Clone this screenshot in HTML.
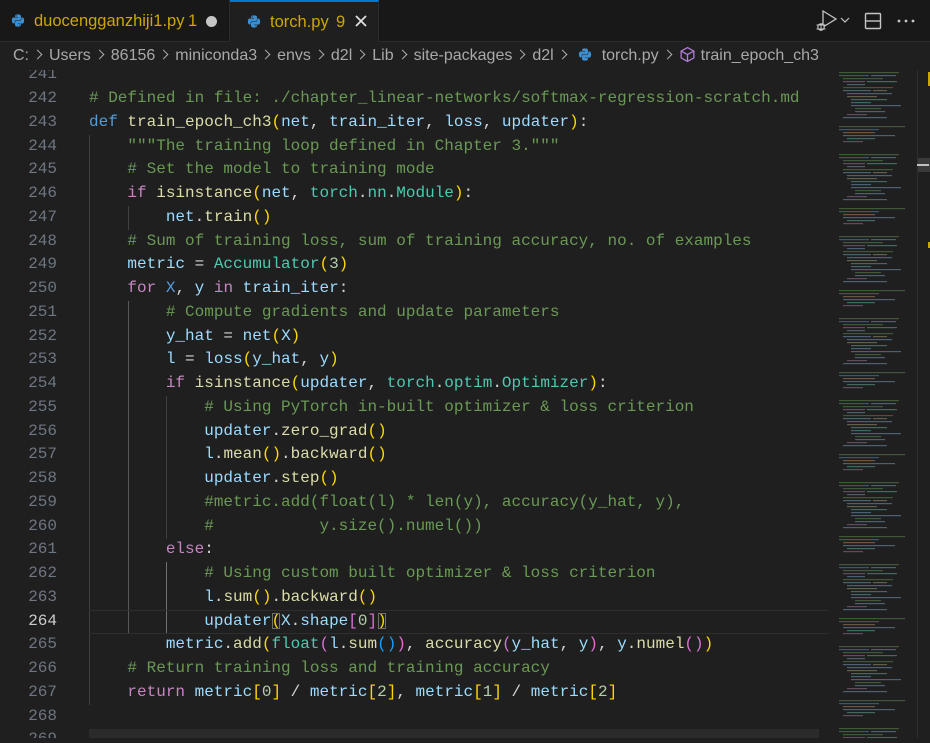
<!DOCTYPE html>
<html><head><meta charset="utf-8">
<style>
*{margin:0;padding:0;box-sizing:border-box}
body{width:930px;height:738px;background:#1f1f1f;overflow:hidden;position:relative;font-family:"Liberation Sans",sans-serif}
#tabs{position:absolute;left:0;top:0;width:930px;height:42px;background:#181818;border-bottom:1px solid #2b2b2b}
.tab{position:absolute;top:0;height:42px;font-size:16.5px;color:#cca700;line-height:42px;white-space:nowrap}
#t1{left:0;width:230px;border-right:1px solid #2b2b2b}
#t2{left:230px;width:149px;background:#1f1f1f;border-top:2px solid #0078d4;border-right:1px solid #2b2b2b;line-height:40px;height:43px}
.py{position:absolute;top:13px;width:14px;height:15px}
#bc{position:absolute;left:0;top:42px;width:930px;height:28px;background:#1f1f1f;color:#a9a9a9;font-size:16px;line-height:28px;padding-left:13px;white-space:nowrap}
#bc .s{display:inline-block;width:20px;height:12px;vertical-align:-1px;position:relative}
#bc .s:after{content:"";position:absolute;left:5px;top:2px;width:6px;height:6px;border-right:1.3px solid #a9a9a9;border-top:1.3px solid #a9a9a9;transform:rotate(45deg)}
#code{position:absolute;left:0;top:70px;width:835px;height:668px;overflow:hidden}
#inner{position:absolute;left:0;top:-6.6px;width:835px}
.ln{height:23.76px;line-height:23.76px;font-family:"Liberation Mono",monospace;font-size:16px;white-space:pre;position:relative}
.num{position:absolute;left:0;width:57px;text-align:right;color:#6e7681}
.tx{position:absolute;left:89px;color:#d4d4d4}
.k{color:#569cd6}.c{color:#c586c0}.f{color:#dcdcaa}.v{color:#9cdcfe}.t{color:#4ec9b0}.m{color:#6a9955}.n{color:#b5cea8}
.b1{color:#ffd700}.b2{color:#da70d6}.b3{color:#179fff}
.g{position:absolute;width:1px;background:#404040}
#mm{position:absolute;left:835px;top:70px;width:82px;height:668px;background:#1f1f1f}
#sb{position:absolute;left:917px;top:70px;width:13px;height:668px;background:#1f1f1f;border-left:1px solid #2e2e2e}
</style></head><body>
<div id="tabs">
 <div class="tab" id="t1">
  <svg class="py" style="left:11px" viewBox="0 0 16 16"><path d="M7.9 1C4.5 1 4.7 2.5 4.7 2.5V4h3.3v.5H3.3S1 4.2 1 7.9s2 3.5 2 3.5h1.2V9.7s-.1-2 2-2h3.3s1.9 0 1.9-1.9V2.9S11.7 1 7.9 1zM6 2.1a.6.6 0 110 1.2.6.6 0 010-1.2z" fill="#3b8ed0"/><path d="M8.1 15c3.4 0 3.2-1.5 3.2-1.5V12H8v-.5h4.7S15 11.8 15 8.1s-2-3.5-2-3.5h-1.2v1.7s.1 2-2 2H6.5s-1.9 0-1.9 1.9v2.9S4.3 15 8.1 15zm1.9-1.1a.6.6 0 110-1.2.6.6 0 010 1.2z" fill="#3b8ed0"/></svg>
  <span style="position:absolute;left:34px">duocengganzhiji1.py</span>
  <span style="position:absolute;left:188px">1</span>
  <span style="position:absolute;left:206px;top:16px;width:11px;height:11px;border-radius:50%;background:#c5c5c5"></span>
 </div>
 <div class="tab" id="t2">
  <svg class="py" style="left:17px;top:12px" viewBox="0 0 16 16"><path d="M7.9 1C4.5 1 4.7 2.5 4.7 2.5V4h3.3v.5H3.3S1 4.2 1 7.9s2 3.5 2 3.5h1.2V9.7s-.1-2 2-2h3.3s1.9 0 1.9-1.9V2.9S11.7 1 7.9 1zM6 2.1a.6.6 0 110 1.2.6.6 0 010-1.2z" fill="#3b8ed0"/><path d="M8.1 15c3.4 0 3.2-1.5 3.2-1.5V12H8v-.5h4.7S15 11.8 15 8.1s-2-3.5-2-3.5h-1.2v1.7s.1 2-2 2H6.5s-1.9 0-1.9 1.9v2.9S4.3 15 8.1 15zm1.9-1.1a.6.6 0 110-1.2.6.6 0 010 1.2z" fill="#3b8ed0"/></svg>
  <span style="position:absolute;left:40px">torch.py</span>
  <span style="position:absolute;left:106px">9</span>
  <svg style="position:absolute;left:125px;top:13px" width="12" height="12" viewBox="0 0 12 12"><path d="M1 1L11 11M11 1L1 11" stroke="#e0e0e0" stroke-width="1.8"/></svg>
 </div>
 <svg style="position:absolute;left:813px;top:9px" width="26" height="24" viewBox="0 0 26 24"><path d="M10 2L23 10L10 18Z" fill="none" stroke="#c5c5c5" stroke-width="1.3"/><circle cx="8" cy="18" r="3.2" fill="#181818" stroke="#c5c5c5" stroke-width="1.2"/><path d="M3.5 16h9M3.5 20h9M8 15v7" stroke="#c5c5c5" stroke-width="1"/></svg>
 <svg style="position:absolute;left:840px;top:17px" width="10" height="7" viewBox="0 0 10 7"><path d="M1 1l4 4 4-4" fill="none" stroke="#c5c5c5" stroke-width="1.2"/></svg>
 <svg style="position:absolute;left:864px;top:12px" width="18" height="18" viewBox="0 0 18 18"><rect x="1.5" y="1.5" width="15" height="15" rx="1" fill="none" stroke="#c5c5c5" stroke-width="1.4"/><path d="M1.5 9h15" stroke="#c5c5c5" stroke-width="1.4"/></svg>
 <svg style="position:absolute;left:897px;top:19px" width="18" height="4" viewBox="0 0 18 4"><circle cx="2" cy="2" r="1.4" fill="#c5c5c5"/><circle cx="9" cy="2" r="1.4" fill="#c5c5c5"/><circle cx="16" cy="2" r="1.4" fill="#c5c5c5"/></svg>
</div>
<div id="bc">C:<span class="s"></span>Users<span class="s"></span>86156<span class="s"></span>miniconda3<span class="s"></span>envs<span class="s"></span>d2l<span class="s"></span>Lib<span class="s"></span>site-packages<span class="s"></span>d2l<span class="s"></span><svg width="14" height="15" viewBox="0 0 16 16" style="vertical-align:-2px;margin:0 10px 0 4px"><path d="M7.9 1C4.5 1 4.7 2.5 4.7 2.5V4h3.3v.5H3.3S1 4.2 1 7.9s2 3.5 2 3.5h1.2V9.7s-.1-2 2-2h3.3s1.9 0 1.9-1.9V2.9S11.7 1 7.9 1z" fill="#3b8ed0"/><path d="M8.1 15c3.4 0 3.2-1.5 3.2-1.5V12H8v-.5h4.7S15 11.8 15 8.1s-2-3.5-2-3.5h-1.2v1.7s.1 2-2 2H6.5s-1.9 0-1.9 1.9v2.9S4.3 15 8.1 15z" fill="#3b8ed0"/></svg>torch.py<span class="s"></span><svg width="17" height="17" viewBox="0 0 16 16" style="vertical-align:-3px;margin-right:5px"><path d="M8 1.5L14 4.8V11.2L8 14.5L2 11.2V4.8Z M2 4.8L8 8L14 4.8 M8 8V14.5" fill="none" stroke="#b180d7" stroke-width="1.2"/></svg>train_epoch_ch3</div>

<div id="code"><div id="inner">
 <div class="g" style="left:89px;top:71.3px;height:570.2px"></div>
 <div class="g" style="left:128px;top:142.6px;height:23.76px"></div>
 <div class="g" style="left:128px;top:237.6px;height:332.6px;background:#585858"></div>
 <div class="g" style="left:166px;top:332.6px;height:142.6px"></div>
 <div class="g" style="left:166px;top:499px;height:71.3px;background:#707070"></div>
 <div style="position:absolute;left:89px;top:546.5px;width:740px;height:23.76px;border-top:1px solid #2e2e2e;border-bottom:1px solid #2e2e2e"></div>
 <div style="position:absolute;left:89px;top:665.3px;width:730px;height:30px;background:#2b2b2b"></div>

 <div class="ln"><span class="num">241</span></div>
 <div class="ln"><span class="num">242</span><span class="tx"><span class="m"># Defined in file: ./chapter_linear-networks/softmax-regression-scratch.md</span></span></div>
 <div class="ln"><span class="num">243</span><span class="tx"><span class="k">def</span> <span class="f">train_epoch_ch3</span><span class="b1">(</span><span class="v">net</span>, <span class="v">train_iter</span>, <span class="v">loss</span>, <span class="v">updater</span><span class="b1">)</span>:</span></div>
 <div class="ln"><span class="num">244</span><span class="tx">    <span class="m">"""The training loop defined in Chapter 3."""</span></span></div>
 <div class="ln"><span class="num">245</span><span class="tx">    <span class="m"># Set the model to training mode</span></span></div>
 <div class="ln"><span class="num">246</span><span class="tx">    <span class="c">if</span> <span class="f">isinstance</span><span class="b1">(</span><span class="v">net</span>, <span class="t">torch</span>.<span class="t">nn</span>.<span class="t">Module</span><span class="b1">)</span>:</span></div>
 <div class="ln"><span class="num">247</span><span class="tx">        <span class="v">net</span>.<span class="f">train</span><span class="b1">()</span></span></div>
 <div class="ln"><span class="num">248</span><span class="tx">    <span class="m"># Sum of training loss, sum of training accuracy, no. of examples</span></span></div>
 <div class="ln"><span class="num">249</span><span class="tx">    <span class="v">metric</span> = <span class="t">Accumulator</span><span class="b1">(</span><span class="n">3</span><span class="b1">)</span></span></div>
 <div class="ln"><span class="num">250</span><span class="tx">    <span class="c">for</span> <span class="k">X</span>, <span class="v">y</span> <span class="c">in</span> <span class="v">train_iter</span>:</span></div>
 <div class="ln"><span class="num">251</span><span class="tx">        <span class="m"># Compute gradients and update parameters</span></span></div>
 <div class="ln"><span class="num">252</span><span class="tx">        <span class="v">y_hat</span> = <span class="v">net</span><span class="b1">(</span><span class="v">X</span><span class="b1">)</span></span></div>
 <div class="ln"><span class="num">253</span><span class="tx">        <span class="v">l</span> = <span class="v">loss</span><span class="b1">(</span><span class="v">y_hat</span>, <span class="v">y</span><span class="b1">)</span></span></div>
 <div class="ln"><span class="num">254</span><span class="tx">        <span class="c">if</span> <span class="f">isinstance</span><span class="b1">(</span><span class="v">updater</span>, <span class="t">torch</span>.<span class="t">optim</span>.<span class="t">Optimizer</span><span class="b1">)</span>:</span></div>
 <div class="ln"><span class="num">255</span><span class="tx">            <span class="m"># Using PyTorch in-built optimizer &amp; loss criterion</span></span></div>
 <div class="ln"><span class="num">256</span><span class="tx">            <span class="v">updater</span>.<span class="f">zero_grad</span><span class="b1">()</span></span></div>
 <div class="ln"><span class="num">257</span><span class="tx">            <span class="v">l</span>.<span class="f">mean</span><span class="b1">()</span>.<span class="f">backward</span><span class="b1">()</span></span></div>
 <div class="ln"><span class="num">258</span><span class="tx">            <span class="v">updater</span>.<span class="f">step</span><span class="b1">()</span></span></div>
 <div class="ln"><span class="num">259</span><span class="tx">            <span class="m">#metric.add(float(l) * len(y), accuracy(y_hat, y),</span></span></div>
 <div class="ln"><span class="num">260</span><span class="tx">            <span class="m">#           y.size().numel())</span></span></div>
 <div class="ln"><span class="num">261</span><span class="tx">        <span class="c">else</span>:</span></div>
 <div class="ln"><span class="num">262</span><span class="tx">            <span class="m"># Using custom built optimizer &amp; loss criterion</span></span></div>
 <div class="ln"><span class="num">263</span><span class="tx">            <span class="v">l</span>.<span class="f">sum</span><span class="b1">()</span>.<span class="f">backward</span><span class="b1">()</span></span></div>
 <div class="ln"><span class="num" style="color:#cccccc">264</span><span class="tx">            <span class="v">updater</span><span class="b1" style="outline:1px solid #707070;outline-offset:-2px">(</span><span class="v">X</span>.<span class="v">shape</span><span class="b2">[</span><span class="n">0</span><span class="b2">]</span><span class="b1" style="outline:1px solid #707070;outline-offset:-2px">)</span></span></div>
 <div class="ln"><span class="num">265</span><span class="tx">        <span class="v">metric</span>.<span class="f">add</span><span class="b1">(</span><span class="t">float</span><span class="b2">(</span><span class="v">l</span>.<span class="f">sum</span><span class="b3">()</span><span class="b2">)</span>, <span class="f">accuracy</span><span class="b2">(</span><span class="v">y_hat</span>, <span class="v">y</span><span class="b2">)</span>, <span class="v">y</span>.<span class="f">numel</span><span class="b2">()</span><span class="b1">)</span></span></div>
 <div class="ln"><span class="num">266</span><span class="tx">    <span class="m"># Return training loss and training accuracy</span></span></div>
 <div class="ln"><span class="num">267</span><span class="tx">    <span class="c">return</span> <span class="v">metric</span><span class="b1">[</span><span class="n">0</span><span class="b1">]</span> / <span class="v">metric</span><span class="b1">[</span><span class="n">2</span><span class="b1">]</span>, <span class="v">metric</span><span class="b1">[</span><span class="n">1</span><span class="b1">]</span> / <span class="v">metric</span><span class="b1">[</span><span class="n">2</span><span class="b1">]</span></span></div>
 <div class="ln"><span class="num">268</span></div>
 <div class="ln"><span class="num">269</span></div>
</div></div>

<div id="mm">
<svg width="82" height="668" viewBox="0 0 82 668">
 <defs>
  <pattern id="p1" width="82" height="82" patternUnits="userSpaceOnUse">
   <rect x="4" y="2" width="60" height="1.2" fill="#5a7a4a"/>
   <rect x="4" y="5" width="30" height="1.2" fill="#4a7aa6"/><rect x="36" y="5" width="25" height="1.2" fill="#6a8ca6"/>
   <rect x="8" y="8" width="40" height="1.2" fill="#5a7a4a"/>
   <rect x="8" y="11" width="22" height="1.2" fill="#8a6a8a"/><rect x="32" y="11" width="30" height="1.2" fill="#5a9a8a"/>
   <rect x="12" y="14" width="18" height="1.2" fill="#6a8ca6"/>
   <rect x="8" y="17" width="50" height="1.2" fill="#5a7a4a"/>
   <rect x="8" y="20" width="28" height="1.2" fill="#6a8ca6"/><rect x="38" y="20" width="14" height="1.2" fill="#8a8a6a"/>
   <rect x="12" y="23" width="45" height="1.2" fill="#6a8ca6"/>
   <rect x="12" y="26" width="30" height="1.2" fill="#8a8a6a"/>
   <rect x="16" y="29" width="36" height="1.2" fill="#5a9a8a"/>
   <rect x="16" y="32" width="20" height="1.2" fill="#6a8ca6"/>
   <rect x="16" y="35" width="50" height="1.2" fill="#6a8ca6"/>
   <rect x="20" y="38" width="26" height="1.2" fill="#5a7a4a"/>
   <rect x="20" y="41" width="30" height="1.2" fill="#6a8ca6"/>
   <rect x="12" y="44" width="20" height="1.2" fill="#8a6a8a"/>
   <rect x="8" y="47" width="44" height="1.2" fill="#6a8ca6"/>
   <rect x="4" y="56" width="66" height="1.2" fill="#5a7a4a"/>
   <rect x="4" y="59" width="40" height="1.2" fill="#4a7aa6"/>
   <rect x="8" y="62" width="32" height="1.2" fill="#9a7a5a"/>
   <rect x="8" y="65" width="52" height="1.2" fill="#6a8ca6"/>
   <rect x="12" y="68" width="28" height="1.2" fill="#5a9a8a"/>
   <rect x="8" y="71" width="20" height="1.2" fill="#8a6a8a"/>
  </pattern>
 </defs>
 <rect x="0" y="0" width="82" height="668" fill="url(#p1)" opacity="0.6"/>
</svg>
</div>
<div id="sb">
 <div style="position:absolute;left:0;top:88px;width:12px;height:14px;background:#3a3a3a"></div>
 <div style="position:absolute;left:-1px;top:94px;width:12px;height:2px;background:#c0c0c0"></div>
 <div style="position:absolute;left:10px;top:2px;width:3px;height:14px;background:#cca700"></div>
 <div style="position:absolute;left:10px;top:172px;width:3px;height:6px;background:#cca700"></div>
</div>
</body></html>
